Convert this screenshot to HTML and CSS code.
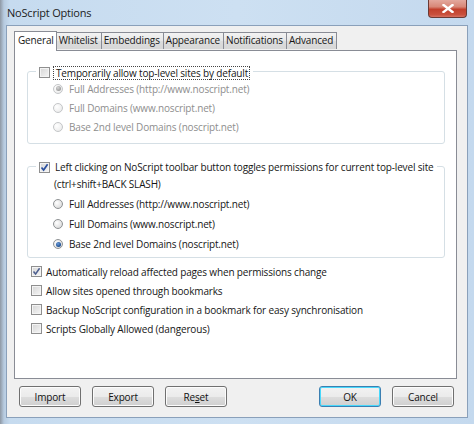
FILE: index.html
```html
<!DOCTYPE html>
<html>
<head>
<meta charset="utf-8">
<link rel="stylesheet" href="styles.css">
</head>
<body>
<div class="window">
  <div class="titlebar">
    <span class="title">NoScript Options</span>
    <div class="close"><svg width="12" height="9" viewBox="0 0 12 9"><path d="M1.5 1 L10.5 8 M10.5 1 L1.5 8" stroke="#fff" stroke-width="2.4" stroke-linecap="square"/></svg></div>
  </div>
  <div class="client">
    <div class="tabs">
      <div class="tab selected">General</div>
      <div class="tab">Whitelist</div>
      <div class="tab">Embeddings</div>
      <div class="tab">Appearance</div>
      <div class="tab">Notifications</div>
      <div class="tab">Advanced</div>
    </div>
    <div class="panel">
      <div class="group g1">
        <div class="caption">
          <span class="cb"></span>
          <span class="focus">Temporarily allow top-level sites by default</span>
        </div>
        <div class="row radio-row disabled"><span class="rb on"></span>Full Addresses (http://www.noscript.net)</div>
        <div class="row radio-row disabled"><span class="rb"></span>Full Domains (www.noscript.net)</div>
        <div class="row radio-row disabled"><span class="rb"></span>Base 2nd level Domains (noscript.net)</div>
      </div>
      <div class="group g2">
        <div class="caption">
          <span class="cb checked"><svg width="9" height="9" viewBox="0 0 9 9"><path d="M1.5 4.5 L3.6 7 L7.6 1.3" fill="none" stroke="#2a4f9e" stroke-width="1.7"/></svg></span>
          <span class="lbl">Left clicking on NoScript toolbar button toggles permissions for current top-level site</span>
        </div>
        <div class="row hint">(ctrl+shift+BACK SLASH)</div>
        <div class="row radio-row r2"><span class="rb"></span>Full Addresses (http://www.noscript.net)</div>
        <div class="row radio-row r2"><span class="rb"></span>Full Domains (www.noscript.net)</div>
        <div class="row radio-row r2"><span class="rb on"></span>Base 2nd level Domains (noscript.net)</div>
      </div>
      <div class="checks">
        <div class="row check-row"><span class="cb checked"><svg width="9" height="9" viewBox="0 0 9 9"><path d="M1.5 4.5 L3.6 7 L7.6 1.3" fill="none" stroke="#4d5f8f" stroke-width="1.5"/></svg></span>Automatically reload affected pages when permissions change</div>
        <div class="row check-row"><span class="cb"></span>Allow sites opened through bookmarks</div>
        <div class="row check-row"><span class="cb"></span>Backup NoScript configuration in a bookmark for easy synchronisation</div>
        <div class="row check-row"><span class="cb"></span>Scripts Globally Allowed (dangerous)</div>
      </div>
    </div>
    <div class="buttons">
      <div class="btn">Import</div>
      <div class="btn">Export</div>
      <div class="btn">Re<u>s</u>et</div>
      <div class="spacer"></div>
      <div class="btn default">OK</div>
      <div class="btn">Cancel</div>
    </div>
  </div>
</div>
</body>
</html>
```
FILE: styles.css
```css
* { box-sizing: border-box; }
html, body { margin: 0; padding: 0; }
body {
  font-family: "Open Sans", "Noto Sans", sans-serif;
  font-size: 10px;
  letter-spacing: -0.16px;
  color: #161616;
  background: #c4d9ee;
}
.window {
  width: 474px;
  height: 424px;
  display: flex;
  flex-direction: column;
  background: linear-gradient(90deg, #8e98a4 0px, #b7cbe0 4px, #c6dbef 10px, #cde0f2 50%, #c4d9ee 100%);
  overflow: hidden;
}
.titlebar {
  height: 25px;
  display: flex;
  align-items: flex-start;
  padding-left: 7px;
}
.title {
  font-size: 11px;
  line-height: 26px;
  color: #1c1c1c;
  letter-spacing: -0.2px;
}
.close {
  margin-left: auto;
  margin-right: 7px;
  width: 39px;
  height: 18px;
  border: 1px solid #6b3a34;
  border-top: none;
  border-radius: 0 0 4px 4px;
  background: linear-gradient(#e3a89d 0%, #d88878 40%, #c2402c 55%, #c9503c 85%, #d87060 100%);
  display: flex;
  align-items: center;
  justify-content: center;
}
.client {
  margin: 0 6px 0 6px;
  height: 393px;
  border: 1px solid #8aa0ba;
  background: #f0f0f0;
  padding: 5px 10px 0 7px;
  display: flex;
  flex-direction: column;
}
.tabs {
  display: flex;
  height: 19px;
  align-items: flex-end;
  position: relative;
  z-index: 1;
}
.tab {
  height: 17px;
  border: 1px solid #898c95;
  border-left: none;
  border-bottom: none;
  background: linear-gradient(#f3f3f3, #e6e6e6 50%, #dcdcdc 51%, #d7d7d7);
  padding: 0 3px 0 2px;
  line-height: 15px;
  font-size: 10px;
  margin-bottom: 1px;
}
.tab.selected {
  height: 20px;
  border-left: 1px solid #898c95;
  background: #fff;
  padding: 0 2px 0 3px;
  line-height: 17px;
  margin-bottom: -1px;
}
.panel {
  height: 329px;
  border: 1px solid #898c95;
  background: #fff;
  display: flex;
  flex-direction: column;
}
.group {
  margin: 0 11px 0 12px;
  border: 1px solid #d5dfe5;
  border-radius: 3px;
}
.g1 { margin-top: 20px; padding-bottom: 7px; }
.g2 { margin-top: 22px; padding-bottom: 3px; }
.caption {
  display: flex;
  align-items: center;
  width: max-content;
  background: #fff;
  margin: -6px 0 0 8px;
  padding: 0 3px;
  height: 13px;
}
.g2 .caption { margin-top: -7px; height: 14px; }
.focus {
  border: 1px dotted #444;
  padding: 0 1px 0 2px;
  margin-left: 3px;
  line-height: 12px;
}
.lbl { margin-left: 5px; }
.row {
  display: flex;
  align-items: center;
  white-space: nowrap;
}
.radio-row { height: 19px; padding-left: 25px; }
.radio-row.r2 { height: 20px; }
.hint { height: 20px; padding-left: 26px; }
.disabled { color: #8e8e8e; }
.rb {
  width: 10px;
  height: 10px;
  border-radius: 50%;
  border: 1px solid #8f9294;
  background: radial-gradient(circle at 35% 35%, #ffffff, #e4e4e4 60%, #cfcfcf);
  margin-right: 6px;
  flex: none;
  display: flex;
  align-items: center;
  justify-content: center;
}
.rb.on::after {
  content: "";
  width: 5px;
  height: 5px;
  border-radius: 50%;
  background: radial-gradient(circle at 40% 35%, #6b9ad8, #1d4f91 70%);
}
.disabled .rb { border-color: #c4c6c8; background: radial-gradient(circle at 35% 35%, #ffffff, #f1f1f1 60%, #e3e3e3); }
.disabled .rb.on::after { background: radial-gradient(circle at 40% 35%, #d5d5d5, #9d9d9d 70%); }
.cb {
  width: 11px;
  height: 11px;
  border: 1px solid #8f8f8f;
  background: linear-gradient(135deg, #d5d5d5, #f6f6f6);
  box-shadow: inset 0 0 0 1px #f4f4f4;
  flex: none;
  display: flex;
  align-items: center;
  justify-content: center;
}
.checks { margin-top: 4px; }
.check-row { height: 19px; padding-left: 16px; }
.check-row .cb { margin-right: 4px; }
.buttons {
  display: flex;
  margin-top: 7px;
  padding-left: 5px;
  gap: 11px;
  padding-right: 3px;
}
.spacer { flex: 1; }
.btn {
  width: 62px;
  height: 21px;
  border: 1px solid #707070;
  border-radius: 3px;
  background: linear-gradient(#f2f2f2 0%, #ebebeb 50%, #dddddd 51%, #cfcfcf 100%);
  box-shadow: inset 0 0 0 1px #fcfcfc;
  display: flex;
  align-items: center;
  justify-content: center;
  font-size: 10px;
  color: #111;
}
.btn.default {
  border-color: #3c7fb1;
  box-shadow: inset 0 0 0 1px #48d8fb;
}
.btn u { text-decoration: underline; }
```
